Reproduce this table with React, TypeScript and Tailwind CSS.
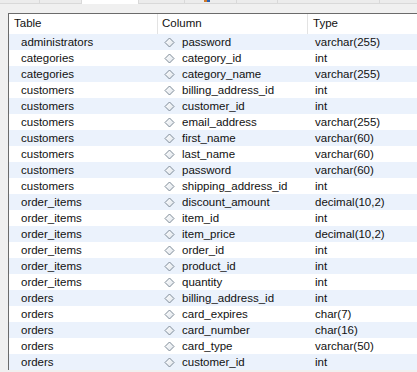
import React from "react";

type Row = [string, string, string];

const rows: Row[] = [
  ["administrators", "password", "varchar(255)"],
  ["categories", "category_id", "int"],
  ["categories", "category_name", "varchar(255)"],
  ["customers", "billing_address_id", "int"],
  ["customers", "customer_id", "int"],
  ["customers", "email_address", "varchar(255)"],
  ["customers", "first_name", "varchar(60)"],
  ["customers", "last_name", "varchar(60)"],
  ["customers", "password", "varchar(60)"],
  ["customers", "shipping_address_id", "int"],
  ["order_items", "discount_amount", "decimal(10,2)"],
  ["order_items", "item_id", "int"],
  ["order_items", "item_price", "decimal(10,2)"],
  ["order_items", "order_id", "int"],
  ["order_items", "product_id", "int"],
  ["order_items", "quantity", "int"],
  ["orders", "billing_address_id", "int"],
  ["orders", "card_expires", "char(7)"],
  ["orders", "card_number", "char(16)"],
  ["orders", "card_type", "varchar(50)"],
  ["orders", "customer_id", "int"],
];

const Diamond = () => (
  <svg width="11" height="11" viewBox="0 0 11 11" className="shrink-0">
    <defs>
      <linearGradient id="dg" x1="0" y1="0" x2="1" y2="1">
        <stop offset="0" stopColor="#ffffff" />
        <stop offset="1" stopColor="#dfe5eb" />
      </linearGradient>
    </defs>
    <polygon
      points="5.5,1 10,5.5 5.5,10 1,5.5"
      fill="url(#dg)"
      stroke="#7d8a97"
      strokeWidth="1"
    />
  </svg>
);

export default function App() {
  return (
    <div
      className="w-[417px] h-[372px] overflow-hidden bg-[#f0f0f0] text-[11.5px] text-[#111]"
      style={{ fontFamily: '"Liberation Sans", Arial, sans-serif' }}
    >
      {/* tab strip */}
      <div className="flex h-[4px]">
        <div className="w-[40px] border-r border-b border-[#d9d9d9] bg-[#ececec]" />
        <div className="w-[42px] border-r border-b border-[#d9d9d9] bg-[#ececec]" />
        <div className="w-[56px] bg-white" />
        <div className="w-[47px] border-l border-r border-b border-[#d9d9d9] bg-[#ececec]" />
        <div className="w-[52px] border-r border-b border-[#d9d9d9] bg-[#ececec] relative">
          <span className="absolute left-[19px] top-0 h-[2px] w-[3px] bg-[#d07a2a]" />
          <span className="absolute left-[22px] top-0 h-[2px] w-[3px] bg-[#2a5fb0]" />
        </div>
        <div className="w-[41px] border-r border-b border-[#d9d9d9] bg-[#ececec]" />
        <div className="w-[102px] border-r border-b border-[#d9d9d9] bg-[#ececec]" />
        <div className="flex-1 border-b border-[#d9d9d9] bg-[#ececec]" />
      </div>

      <div className="pt-[9px] pl-[8px]">
        <div className="border-l border-t border-[#6b6b6b] bg-white">
          {/* header */}
          <div className="grid grid-cols-[149px_150px_1fr] h-[20px] items-stretch">
            <div className="flex items-center pl-[5px] border-r border-[#e3e3e3]">Table</div>
            <div className="flex items-center pl-[4px] border-r border-[#e3e3e3]">Column</div>
            <div className="flex items-center pl-[5px]">Type</div>
          </div>
          {rows.map((r, i) => (
            <div
              key={i}
              className={`grid grid-cols-[150px_150px_1fr] h-[16px] items-center ${
                i % 2 === 0 ? "bg-[#ebf2fc]" : "bg-white"
              }`}
            >
              <div className="pl-[12px] whitespace-nowrap">{r[0]}</div>
              <div className="flex items-center gap-[7px] pl-[5px] whitespace-nowrap">
                <Diamond />
                <span>{r[1]}</span>
              </div>
              <div className="pl-[6px] whitespace-nowrap">{r[2]}</div>
            </div>
          ))}
        </div>
      </div>
    </div>
  );
}
